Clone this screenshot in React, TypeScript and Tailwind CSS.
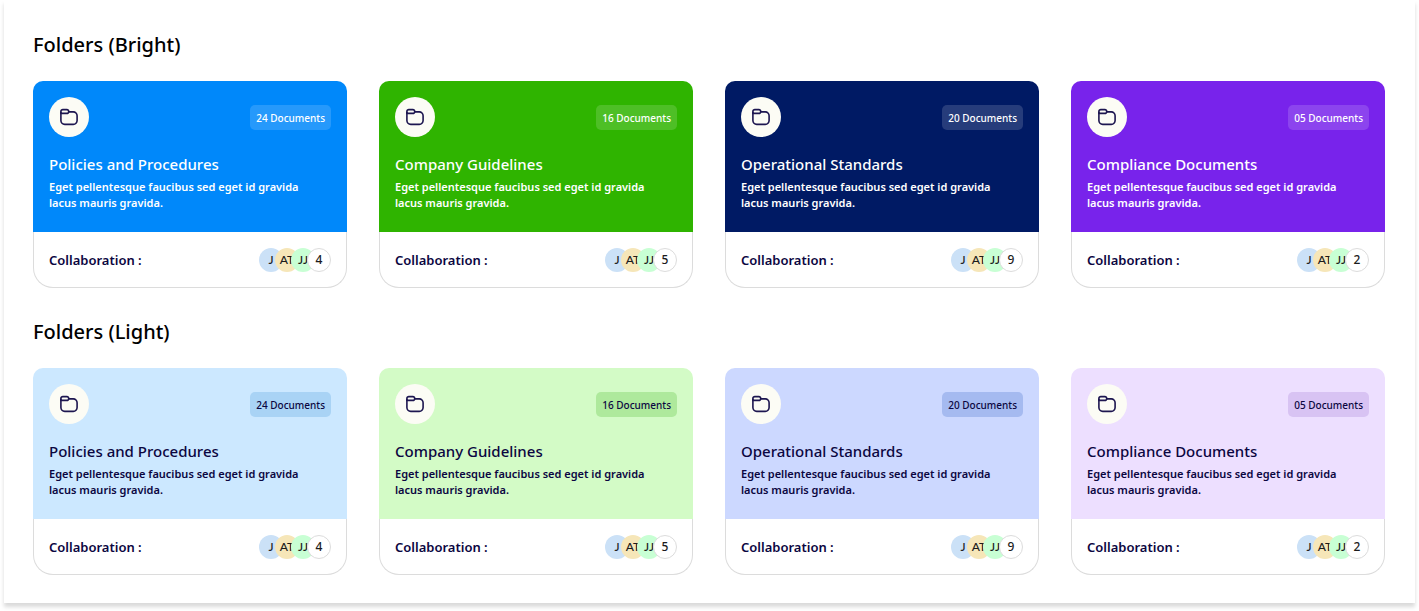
const avatars = [
  { initials: 'J', tone: 'bg-[#cbe1f7]' },
  { initials: 'AT', tone: 'bg-[#f6e6b8]' },
  { initials: 'JJ', tone: 'bg-[#c8ffd4]' },
];

type Theme = { header: string; badge: string };

const folders: { title: string; count: string; extra: number; bright: Theme; light: Theme }[] = [
  {
    title: 'Policies and Procedures',
    count: '24',
    extra: 4,
    bright: { header: 'bg-[#0088fa] text-white', badge: 'bg-[#2699fb]' },
    light: { header: 'bg-[#cce8ff] text-[#0b0641]', badge: 'bg-[#a9d3f5]' },
  },
  {
    title: 'Company Guidelines',
    count: '16',
    extra: 5,
    bright: { header: 'bg-[#2fb400] text-white', badge: 'bg-[#4ebf26]' },
    light: { header: 'bg-[#d3fbc6] text-[#0b0641]', badge: 'bg-[#aee99c]' },
  },
  {
    title: 'Operational Standards',
    count: '20',
    extra: 9,
    bright: { header: 'bg-[#001a64] text-white', badge: 'bg-[#263c7b]' },
    light: { header: 'bg-[#ccd8ff] text-[#0b0641]', badge: 'bg-[#a5baf0]' },
  },
  {
    title: 'Compliance Documents',
    count: '05',
    extra: 2,
    bright: { header: 'bg-[#7823eb] text-white', badge: 'bg-[#8c44ee]' },
    light: { header: 'bg-[#eddfff] text-[#0b0641]', badge: 'bg-[#d8c3f3]' },
  },
];

function FolderIcon() {
  return (
    <svg viewBox="0 0 20 20" className="size-5" fill="none" stroke="#1d1650" strokeWidth="1.6" strokeLinejoin="round" aria-hidden="true">
      <path d="M1.9 4.8V13.6a3.8 3.8 0 0 0 3.8 3.8H14.3a3.8 3.8 0 0 0 3.8-3.8V8.7A3.8 3.8 0 0 0 14.3 4.9H9.6" />
      <path d="M1.9 6.4V4.5A1.9 1.9 0 0 1 3.8 2.6H7.9A1.8 1.8 0 0 1 9.7 4.4A2 2 0 0 1 7.7 6.4Z" />
    </svg>
  );
}

function FolderCard({ title, count, extra, theme }: { title: string; count: string; extra: number; theme: Theme }) {
  return (
    <article>
      <div className={`rounded-t-[10px] px-4 pt-4 pb-[21px] ${theme.header}`}>
        <div className="flex items-center justify-between">
          <span className="flex size-10 items-center justify-center rounded-full bg-[#fcfcf5]">
            <FolderIcon />
          </span>
          <span className={`rounded-[5px] px-1.5 pt-[5px] pb-[3px] text-[10px] leading-[17px] font-medium ${theme.badge}`}>{count} Documents</span>
        </div>
        <h3 className="mt-[15px] text-[15px] leading-6 font-medium">{title}</h3>
        <p className="mt-[3px] pr-5 text-[11px] leading-4 font-semibold">Eget pellentesque faucibus sed eget id gravida lacus mauris gravida.</p>
      </div>
      <div className="flex h-14 items-center justify-between rounded-b-[20px] border border-t-0 border-[#dcdcdc] px-[15px]">
        <span className="text-[13px] leading-5 font-semibold text-[#0b0641]">Collaboration :</span>
        <div className="flex -space-x-2 text-xs font-medium text-[#1c1c1c]">
          {avatars.map((a) => (
            <span key={a.initials} className={`flex size-6 items-center justify-center rounded-full font-[Lato,sans-serif] ${a.tone}`}>
              {a.initials}
            </span>
          ))}
          <span className="flex size-6 items-center justify-center rounded-full border border-[#dcdcdc] bg-white">{extra}</span>
        </div>
      </div>
    </article>
  );
}

function FolderSection({ heading, variant }: { heading: string; variant: 'bright' | 'light' }) {
  return (
    <section>
      <h2 className="text-xl leading-7 font-medium text-black">{heading}</h2>
      <div className="mt-[22px] grid grid-cols-4 gap-8">
        {folders.map((f) => (
          <FolderCard key={f.title} title={f.title} count={f.count} extra={f.extra} theme={f[variant]} />
        ))}
      </div>
    </section>
  );
}

export default function App() {
  return (
    <div className="bg-white px-1 pb-2 font-['Noto_Sans',sans-serif]">
      <main className="flex flex-col gap-[30px] bg-white pt-[31px] pr-[30px] pb-7 pl-[29px] shadow-[0_4px_4px_rgba(0,0,0,0.15)]">
        <FolderSection heading="Folders (Bright)" variant="bright" />
        <FolderSection heading="Folders (Light)" variant="light" />
      </main>
    </div>
  );
}
